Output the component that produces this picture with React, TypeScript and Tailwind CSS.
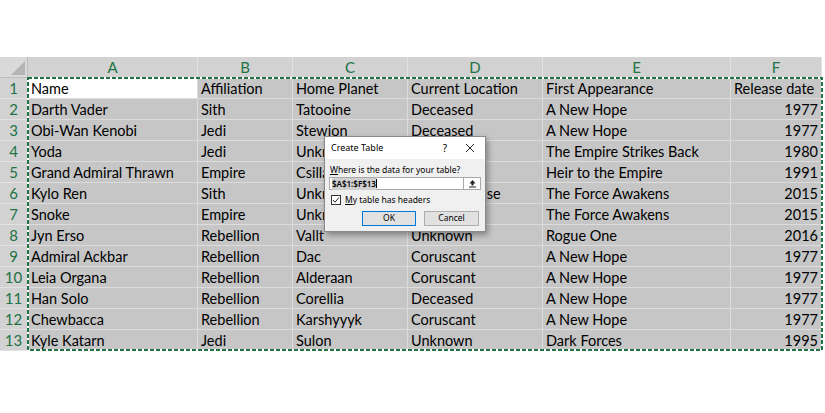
import React from 'react';

const columns = [
  { id: 'A', width: 170 },
  { id: 'B', width: 95 },
  { id: 'C', width: 115 },
  { id: 'D', width: 135 },
  { id: 'E', width: 188 },
  { id: 'F', width: 91 },
];

const rows: string[][] = [
  ['Name', 'Affiliation', 'Home Planet', 'Current Location', 'First Appearance', 'Release date'],
  ['Darth Vader', 'Sith', 'Tatooine', 'Deceased', 'A New Hope', '1977'],
  ['Obi-Wan Kenobi', 'Jedi', 'Stewion', 'Deceased', 'A New Hope', '1977'],
  ['Yoda', 'Jedi', 'Unknown', 'Deceased', 'The Empire Strikes Back', '1980'],
  ['Grand Admiral Thrawn', 'Empire', 'Csilla', 'Unknown', 'Heir to the Empire', '1991'],
  ['Kylo Ren', 'Sith', 'Unknown', 'Starkiller Base', 'The Force Awakens', '2015'],
  ['Snoke', 'Empire', 'Unknown', 'Unknown', 'The Force Awakens', '2015'],
  ['Jyn Erso', 'Rebellion', 'Vallt', 'Unknown', 'Rogue One', '2016'],
  ['Admiral Ackbar', 'Rebellion', 'Dac', 'Coruscant', 'A New Hope', '1977'],
  ['Leia Organa', 'Rebellion', 'Alderaan', 'Coruscant', 'A New Hope', '1977'],
  ['Han Solo', 'Rebellion', 'Corellia', 'Deceased', 'A New Hope', '1977'],
  ['Chewbacca', 'Rebellion', 'Karshyyyk', 'Coruscant', 'A New Hope', '1977'],
  ['Kyle Katarn', 'Jedi', 'Sulon', 'Unknown', 'Dark Forces', '1995'],
];

const gridCols = '28px 170px 95px 115px 135px 188px 91px';

const CreateTableDialog: React.FC = () => {
  return (
    <div
      className="absolute left-[324px] top-[136px] w-[162px] h-[96px] border border-[#8a8a8a] bg-[#f0f0f0] shadow-[2px_3px_6px_rgba(0,0,0,0.35)] flex flex-col text-black"
      style={{ fontFamily: '"Noto Sans", "Open Sans", sans-serif' }}
    >
      <div className="h-[22px] bg-white flex items-center pl-[6px] text-[9px]">
        <span className="flex-1">Create Table</span>
        <span className="w-[20px] text-center text-[10px]">?</span>
        <span className="w-[30px] flex justify-center">
          <svg width="10" height="10" viewBox="0 0 10 10">
            <path d="M1 1 L9 9 M9 1 L1 9" stroke="#222" strokeWidth="1" fill="none" />
          </svg>
        </span>
      </div>
      <div className="flex flex-col px-[4px] pt-[5px]">
        <div className="text-[8.5px] leading-[11px] pl-[1px]">
          <span className="underline">W</span>here is the data for your table?
        </div>
        <div className="flex mt-[2px] h-[13px]">
          <div className="flex-1 bg-white border border-[#a9a9a9] flex items-center pl-[2px] text-[8px] font-semibold">
            <span className="bg-[#cfcfcf]">$A$1:$F$13</span>
            <span className="w-px h-[9px] bg-black" />
          </div>
          <div className="w-[17px] bg-white border border-l-0 border-[#a9a9a9] flex items-center justify-center">
            <svg width="9" height="9" viewBox="0 0 9 9">
              <path d="M4.5 1 L1.5 4.5 H3.5 V6.5 H5.5 V4.5 H7.5 Z" fill="#222" />
              <rect x="1" y="7.5" width="7" height="1" fill="#222" />
            </svg>
          </div>
        </div>
        <div className="flex items-center mt-[4px] gap-[4px] pl-[2px]">
          <div className="w-[10px] h-[10px] bg-white border border-[#333] flex items-center justify-center">
            <svg width="8" height="8" viewBox="0 0 8 8">
              <path d="M1 4 L3 6.2 L7 1.5" stroke="#222" strokeWidth="1" fill="none" />
            </svg>
          </div>
          <span className="text-[8.5px] leading-[11px]">
            <span className="underline">M</span>y table has headers
          </span>
        </div>
        <div className="flex justify-end gap-[8px] mt-[6px] pr-[2px]">
          <div className="w-[54px] h-[15px] bg-[#e1e1e1] border border-[#0078d7] flex items-center justify-center text-[8.5px]">
            OK
          </div>
          <div className="w-[55px] h-[15px] bg-[#e1e1e1] border border-[#adadad] flex items-center justify-center text-[8.5px]">
            Cancel
          </div>
        </div>
      </div>
    </div>
  );
};

const App: React.FC = () => {
  return (
    <div
      className="w-[825px] h-[413px] bg-white pt-[57px] overflow-hidden"
      style={{ fontFamily: 'Lato, "Open Sans", sans-serif' }}
    >
      <div className="relative">
        <div className="grid" style={{ gridTemplateColumns: gridCols }}>
          {/* column headers */}
          <div className="h-[21px] bg-[#d9d9d9] border-r border-b border-[#bdbdbd] relative overflow-hidden">
            <svg className="absolute right-[2px] bottom-[2px]" width="14" height="14" viewBox="0 0 14 14">
              <path d="M14 0 L14 14 L0 14 Z" fill="#b4b4b4" />
            </svg>
          </div>
          {columns.map((c) => (
            <div
              key={c.id}
              className="h-[21px] bg-[#d2d2d2] border-r border-b border-[#e2e2e2] flex items-center justify-center text-[15px] text-[#217346]"
            >
              {c.id}
            </div>
          ))}

          {rows.map((row, r) => (
            <React.Fragment key={r}>
              <div className="h-[21px] bg-[#d2d2d2] border-b border-r border-[#e2e2e2] flex items-center justify-center text-[15px] text-[#217346]">
                {r + 1}
              </div>
              {row.map((cell, c) => (
                <div
                  key={c}
                  className={`h-[21px] border-r border-b border-[#dcdcdc] flex items-center pl-[3px] pr-[3px] pt-[2px] text-[14.5px] text-black whitespace-nowrap overflow-hidden ${
                    r === 0 && c === 0 ? 'bg-white' : 'bg-[#c6c6c6]'
                  } ${c === 5 && r > 0 ? 'justify-end' : ''}`}
                >
                  {cell}
                </div>
              ))}
            </React.Fragment>
          ))}
        </div>

        {/* marching ants around the selected range */}
        <svg className="absolute left-[27px] top-[20px] pointer-events-none" width="797" height="275">
          <rect x="1" y="1" width="794" height="272" fill="none" stroke="#ffffff" strokeWidth="2" />
          <rect x="1" y="1" width="794" height="272" fill="none" stroke="#217346" strokeWidth="2" strokeDasharray="4 2" />
        </svg>

        <div className="absolute left-0 top-[-57px]">
          <CreateTableDialog />
        </div>
      </div>
    </div>
  );
};

export default App;
